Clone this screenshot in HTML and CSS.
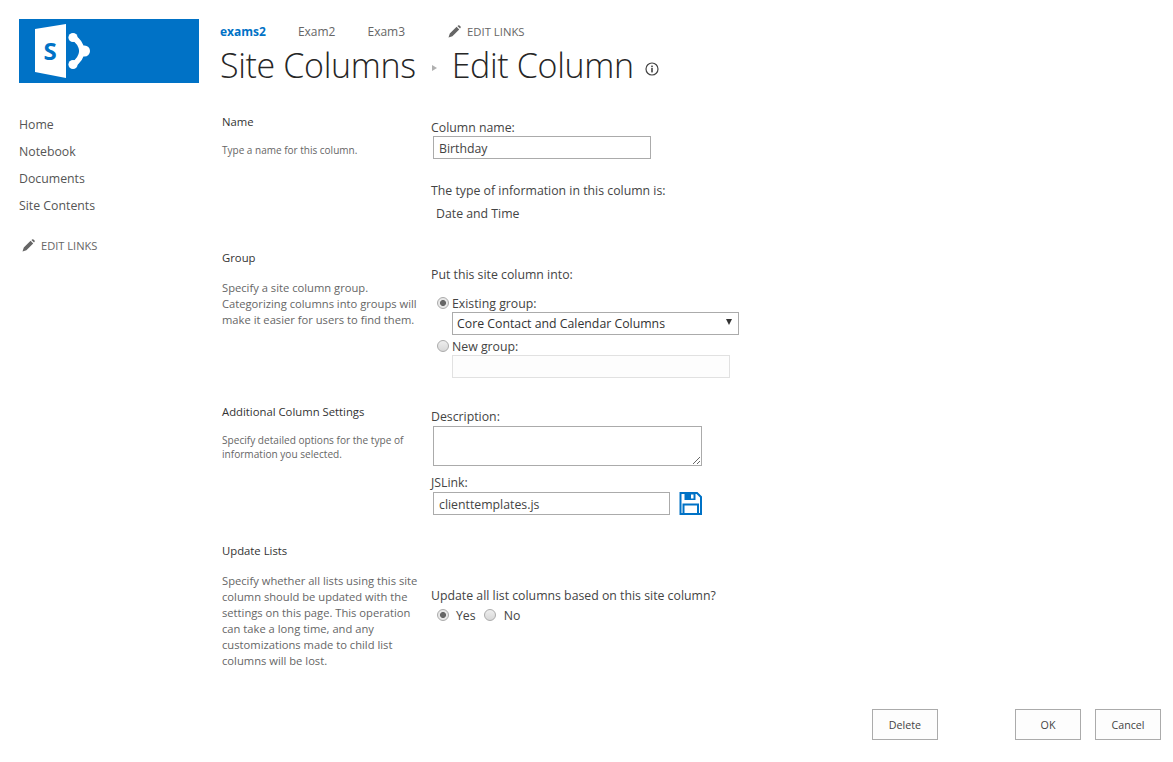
FILE: index.html
```html
<!DOCTYPE html>
<html lang="en">
<head>
<meta charset="utf-8">
<title>Edit Column</title>
<link rel="stylesheet" href="styles.css">
</head>
<body>
<div class="page">
  <aside class="side">
    <div class="logo">
      <svg class="logo-mark" width="56" height="56" viewBox="0 0 56 56">
        <path class="w" d="M0 6 L31 1 V55 L0 49 Z"/>
        <text class="logo-s" x="8.5" y="37">S</text>
        <circle class="w" cx="38" cy="14.5" r="4.6"/>
        <circle class="w" cx="49.5" cy="28" r="5.5"/>
        <circle class="w" cx="38" cy="41.5" r="4.6"/>
        <path class="arc" d="M38 14.5 Q46 19 47 28 Q46 37 38 41.5"/>
      </svg>
    </div>
    <nav class="quick">
      <a>Home</a>
      <a>Notebook</a>
      <a>Documents</a>
      <a>Site Contents</a>
    </nav>
    <div class="edit side-edit">
      <svg class="pencil" width="13" height="13" viewBox="0 0 13 13"><path d="M0.5 12.5 L1.8 8.6 L8.6 1.8 L11.2 4.4 L4.4 11.2 Z M9.4 1 L10.2 0.4 C10.6 0.1 11 0.1 11.4 0.4 L12.6 1.6 C12.9 2 12.9 2.4 12.6 2.8 L12 3.6 Z"/></svg>
      <span>EDIT LINKS</span>
    </div>
  </aside>
  <main class="main">
    <header class="head">
      <div class="topnav">
        <a class="current">exams2</a>
        <a>Exam2</a>
        <a>Exam3</a>
        <div class="edit top-edit">
          <svg class="pencil" width="13" height="13" viewBox="0 0 13 13"><path d="M0.5 12.5 L1.8 8.6 L8.6 1.8 L11.2 4.4 L4.4 11.2 Z M9.4 1 L10.2 0.4 C10.6 0.1 11 0.1 11.4 0.4 L12.6 1.6 C12.9 2 12.9 2.4 12.6 2.8 L12 3.6 Z"/></svg>
          <span>EDIT LINKS</span>
        </div>
      </div>
      <h1 class="title">
        <span>Site Columns</span>
        <i class="crumb"></i>
        <span>Edit Column</span>
        <svg class="info" width="14" height="14" viewBox="0 0 14 14"><circle cx="7" cy="7" r="6" fill="none" stroke="#444" stroke-width="1.2"/><rect x="6.2" y="6" width="1.6" height="4.4" fill="#444"/><rect x="6.2" y="3.6" width="1.6" height="1.6" fill="#444"/></svg>
      </h1>
    </header>

    <section class="row row-name">
      <div class="info-col">
        <h3>Name</h3>
        <p>Type a name for this column.</p>
      </div>
      <div class="ctl">
        <label class="lbl">Column name:</label>
        <input class="field name-field" type="text" value="Birthday">
        <div class="lbl type-lbl">The type of information in this column is:</div>
        <div class="type-val">Date and Time</div>
      </div>
    </section>

    <section class="row row-group">
      <div class="info-col">
        <h3>Group</h3>
        <p>Specify a site column group. Categorizing columns into groups will make it easier for users to find them.</p>
      </div>
      <div class="ctl">
        <div class="lbl put-lbl">Put this site column into:</div>
        <div class="radio-line"><i class="radio on"></i><span>Existing group:</span></div>
        <div class="select"><span>Core Contact and Calendar Columns</span><i class="arrow"></i></div>
        <div class="radio-line new-line"><i class="radio"></i><span>New group:</span></div>
        <div class="disabled-field"></div>
      </div>
    </section>

    <section class="row row-extra">
      <div class="info-col">
        <h3>Additional Column Settings</h3>
        <p>Specify detailed options for the type of information you selected.</p>
      </div>
      <div class="ctl">
        <div class="lbl">Description:</div>
        <textarea class="desc"></textarea>
        <div class="lbl js-lbl">JSLink:</div>
        <div class="js-line">
          <input class="field js-field" type="text" value="clienttemplates.js">
          <svg class="save" width="23" height="23" viewBox="0 0 23 23"><path d="M1.5 1 H18 L22 5 V22 H1.5 Z" fill="none" stroke="#0072c6" stroke-width="2"/><path d="M5.5 1 H16.5 V8 H5.5 Z" fill="#0072c6"/><rect x="12" y="2.5" width="2.5" height="4" fill="#fff"/><path d="M4.5 12.5 H19 V22 H4.5 Z" fill="#fff" stroke="#0072c6" stroke-width="2"/></svg>
        </div>
      </div>
    </section>

    <section class="row row-update">
      <div class="info-col">
        <h3>Update Lists</h3>
        <p>Specify whether all lists using this site column should be updated with the settings on this page. This operation can take a long time, and any customizations made to child list columns will be lost.</p>
      </div>
      <div class="ctl update-ctl">
        <div class="lbl">Update all list columns based on this site column?</div>
        <div class="radio-line yes-no">
          <i class="radio on"></i><span class="yes">Yes</span>
          <i class="radio"></i><span>No</span>
        </div>
      </div>
    </section>

    <footer class="actions">
      <button class="btn delete">Delete</button>
      <button class="btn">OK</button>
      <button class="btn">Cancel</button>
    </footer>
  </main>
</div>
</body>
</html>
```

FILE: styles.css
```css
* { box-sizing: border-box; }
html, body { margin: 0; padding: 0; background: #fff; }
body {
  font-family: "Open Sans", "Noto Sans", sans-serif;
  font-size: 12.3px;
  color: #444;
  width: 1173px;
  height: 762px;
  overflow: hidden;
}
a { color: inherit; text-decoration: none; }

.page { display: flex; align-items: flex-start; height: 100%; }

/* left rail */
.side { width: 222px; flex: none; padding: 19px 0 0 19px; }
.logo {
  width: 180px; height: 64px; background: #0072c6;
  display: flex; align-items: center; padding-left: 16px;
}
.logo-mark { display: block; }
.logo-mark .w { fill: #fff; }
.logo-mark .arc { fill: none; stroke: #fff; stroke-width: 5.5; }
.logo-s { font: bold 24px "Open Sans", sans-serif; fill: #0072c6; }
.quick { display: flex; flex-direction: column; margin-top: 28px; }
.quick a { height: 27px; line-height: 27px; font-size: 12.3px; color: #555; }
.edit { display: flex; align-items: center; color: #666; }
.pencil { fill: #666; display: block; }
.side-edit { margin-top: 13px; padding-left: 3px; height: 27px; font-size: 11.1px; }
.side-edit span { margin-left: 6px; }

/* header */
.main { width: 951px; flex: none; }
.head { height: 115px; padding-top: 22px; margin-left: -2px; }
.topnav { display: flex; align-items: center; height: 18px; font-size: 12px; color: #666; }
.topnav a { margin-right: 32px; }
.topnav .current { color: #0072c6; font-weight: 700; }
.top-edit { margin-left: 11px; font-size: 11.3px; }
.top-edit span { margin-left: 6px; }
.title {
  margin: 0; display: flex; align-items: center;
  font-family: "Open Sans", sans-serif; font-weight: 300;
  font-size: 34px; letter-spacing: -0.35px; line-height: 50px; color: #262626;
}
.crumb {
  width: 0; height: 0; margin: 6px 15px 0 16px;
  border-left: 5px solid #b0b0b0;
  border-top: 3.5px solid transparent;
  border-bottom: 3.5px solid transparent;
}
.info { margin: 7px 0 0 11px; }

/* form rows */
.row { display: grid; grid-template-columns: 209px 1fr; }
.row-name { height: 136px; }
.row-group { height: 154px; }
.row-extra { height: 139px; }
.row-update { height: 150px; }
.info-col h3 { margin: 0; font-size: 11.3px; font-weight: 400; line-height: 14px; color: #333; }
.info-col p { margin: 14px 0 0; line-height: 16px; color: #666; width: 197px; }
.row-name .info-col p { font-size: 10px; margin-top: 13px; }
.row-group .info-col p { font-size: 11.2px; margin-top: 15px; }
.row-extra .info-col p { font-size: 10.1px; line-height: 14px; }
.row-update .info-col p { font-size: 11.2px; margin-top: 15px; }
.lbl { font-size: 12.3px; line-height: 16px; margin-top: 4px; color: #444; }
label.lbl { display: block; margin-top: 5px; }
.field {
  display: block; height: 23px; border: 1px solid #ababab; padding: 2px 5px 0;
  font: 12.3px "Open Sans", sans-serif; color: #444; background: #fff;
}
.name-field { width: 218px; margin: 0 0 0 2px; }
.type-lbl { margin-top: 24px; }
.type-val { margin: 7px 0 0 5px; line-height: 16px; }
.put-lbl { margin-top: 16px; }
.radio-line { display: flex; align-items: center; height: 16px; margin-left: 6px; }
.row-group .radio-line { margin-top: 12px; }
.row-group .new-line { margin-top: 3px; }
.radio {
  width: 12px; height: 12px; border-radius: 50%; margin-right: 3px; flex: none;
  border: 1px solid #ababab; background: linear-gradient(#eee, #d8d8d8);
}
.radio.on { background: radial-gradient(circle, #666 0 2.6px, #e8e8e8 3.4px); }
.select {
  width: 287px; height: 23px; margin: 1px 0 0 21px; border: 1px solid #ababab;
  display: flex; align-items: center; justify-content: space-between;
  padding: 0 6px 0 4px; color: #333;
}
.arrow {
  width: 0; height: 0;
  border-top: 6px solid #333;
  border-left: 3.5px solid transparent;
  border-right: 3.5px solid transparent;
  margin-bottom: 3px;
}
.disabled-field {
  width: 278px; height: 23px; margin: 1px 0 0 21px;
  border: 1px solid #e1e1e1; background: #fdfdfd;
}
.desc {
  display: block; width: 269px; height: 40px; margin: 1px 0 0 2px;
  border: 1px solid #ababab; padding: 0; background: #fff;
}
.js-lbl { margin-top: 9px; }
.js-line { display: flex; align-items: center; margin: 1px 0 0 2px; }
.js-field { width: 237px; }
.save { margin-left: 9px; }
.update-ctl { padding-top: 40px; }
.yes-no { margin-top: 3px; }
.yes-no .radio { margin-right: 7px; }
.yes { margin-right: 8px; }
.yes + .radio { margin-right: 8px; }

/* buttons */
.actions { display: flex; justify-content: flex-end; padding-right: 12px; margin-top: 15px; }
.btn {
  width: 66px; height: 31px; border: 1px solid #ababab; background: #fdfdfd;
  font: 10.7px "Open Sans", sans-serif; color: #444; margin-left: 14px; padding: 0;
}
.btn.delete { margin-right: 63px; }
```
